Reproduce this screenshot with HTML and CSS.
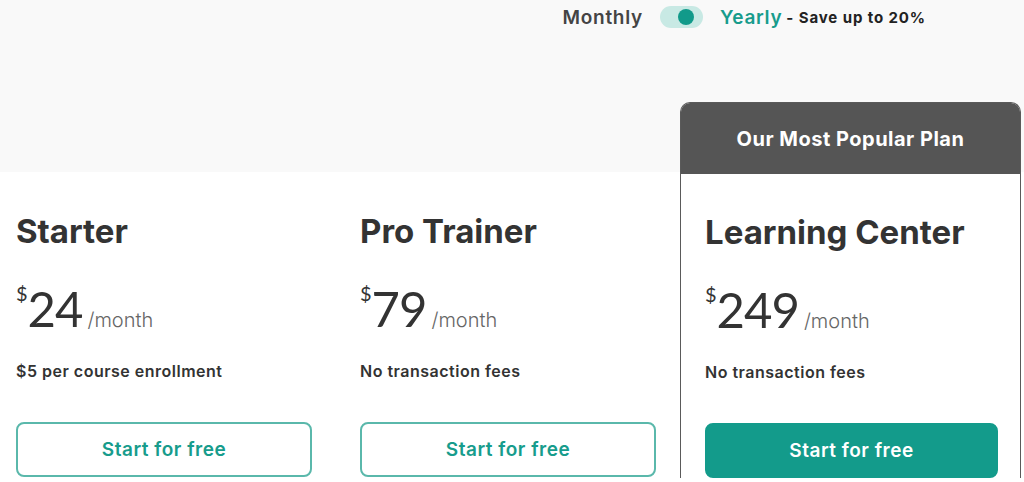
FILE: index.html
```html
<!DOCTYPE html>
<html lang="en">
<head>
    <meta charset="UTF-8">
    <meta name="viewport" content="width=device-width, initial-scale=1.0">
    <title>Pricing</title>
    <link rel="stylesheet" href="styles.css">
</head>

<body>
    <!-- billing toggle -->
    <div class="billing">
        <span class="billing-label">Monthly</span>
        <span class="toggle"><span class="toggle-knob"></span></span>
        <span class="billing-label billing-label--active">Yearly</span>
        <span class="billing-save">- Save up to 20%</span>
    </div>

    <!-- plans -->
    <div class="plans">
        <div class="plan plan--plain">
            <h2 class="plan-name">Starter</h2>
            <p class="plan-price"><sup>$</sup><span class="plan-amount">24</span><span class="plan-period">/month</span></p>
            <p class="plan-note">$5 per course enrollment</p>
            <button class="plan-button">Start for free</button>
        </div>
        <div class="plan plan--plain">
            <h2 class="plan-name">Pro Trainer</h2>
            <p class="plan-price"><sup>$</sup><span class="plan-amount">79</span><span class="plan-period">/month</span></p>
            <p class="plan-note">No transaction fees</p>
            <button class="plan-button">Start for free</button>
        </div>
        <div class="plan plan--featured">
            <div class="plan-badge">Our Most Popular Plan</div>
            <div class="plan-body">
                <h2 class="plan-name">Learning Center</h2>
                <p class="plan-price"><sup>$</sup><span class="plan-amount">249</span><span class="plan-period">/month</span></p>
                <p class="plan-note">No transaction fees</p>
                <button class="plan-button plan-button--filled">Start for free</button>
            </div>
        </div>
    </div>
</body>
</html>
```

FILE: styles.css
```css
/* 기본 */
html {
    background: #fff linear-gradient(#f9f9f9 172px, #fff 172px) no-repeat;
}

body {
    margin: 0;
    font-family: Inter, "Noto Sans", sans-serif;
    color: #333;
    overflow: hidden;
}

/* 월간 / 연간 토글 */
.billing {
    display: flex;
    align-items: center;
    justify-content: flex-end;
    height: 34px;
    padding-right: 98px;
}

.billing-label {
    font-size: 19px;
    font-weight: 600;
    color: #444;
    letter-spacing: 0.7px;
}

.billing-label--active {
    color: #179c8c;
}

.toggle {
    display: flex;
    align-items: center;
    justify-content: flex-end;
    box-sizing: border-box;
    width: 43px;
    height: 22px;
    margin: 0 17px;
    padding: 0 9px;
    background-color: #c8e9e4;
    border-radius: 11px;
}

.toggle-knob {
    width: 16px;
    height: 16px;
    background-color: #119a8a;
    border-radius: 50%;
}

.billing-save {
    margin-left: 4px;
    font-size: 15px;
    font-weight: 700;
    color: #222;
    letter-spacing: 0.9px;
}

/* 요금제 */
.plans {
    display: grid;
    grid-template-columns: 336px 344px 341px;
    margin-top: 68px;
}

.plan {
    padding: 0 24px;
}

.plan:first-child {
    padding-left: 16px;
}

.plan--plain {
    padding-top: 71px;
}

.plan--featured {
    padding: 0;
    border: 1px solid #5a5a5a;
    border-bottom: none;
    border-radius: 10px 10px 0 0;
    background-color: #fff;
}

.plan-badge {
    display: flex;
    align-items: center;
    justify-content: center;
    height: 71px;
    background-color: #555;
    color: #fff;
    font-size: 20px;
    font-weight: 700;
    letter-spacing: 0.5px;
    border-radius: 9px 9px 0 0;
}

.plan-body {
    padding: 0 22px 0 24px;
}

.plan-name {
    margin: 0;
    padding-top: 38px;
    font-size: 33px;
    font-weight: 700;
    line-height: 40px;
    color: #333;
}

.plan-price {
    display: flex;
    align-items: baseline;
    margin: 32px 0 0;
    line-height: 50px;
}

.plan-price sup {
    align-self: flex-start;
    font-family: Lato, sans-serif;
    font-size: 20px;
    line-height: 20px;
}

.plan-amount {
    font-family: Lato, sans-serif;
    font-size: 49px;
    font-weight: 400;
    color: #333;
    letter-spacing: -1px;
}

.plan-period {
    margin-left: 5px;
    font-size: 20px;
    font-weight: 300;
    color: #666;
}

.plan-note {
    margin: 16px 0 0;
    font-size: 16px;
    font-weight: 600;
    line-height: 20px;
    letter-spacing: 0.5px;
    color: #333;
}

.plan-button {
    display: block;
    width: 100%;
    height: 55px;
    margin-top: 41px;
    border: 2px solid #5ab8ab;
    border-radius: 8px;
    background-color: #fff;
    color: #179c8c;
    font-family: inherit;
    font-size: 19px;
    font-weight: 600;
    letter-spacing: 0.5px;
    cursor: pointer;
}

.plan-button--filled {
    border-color: #139b8b;
    background-color: #139b8b;
    color: #fff;
}
```
